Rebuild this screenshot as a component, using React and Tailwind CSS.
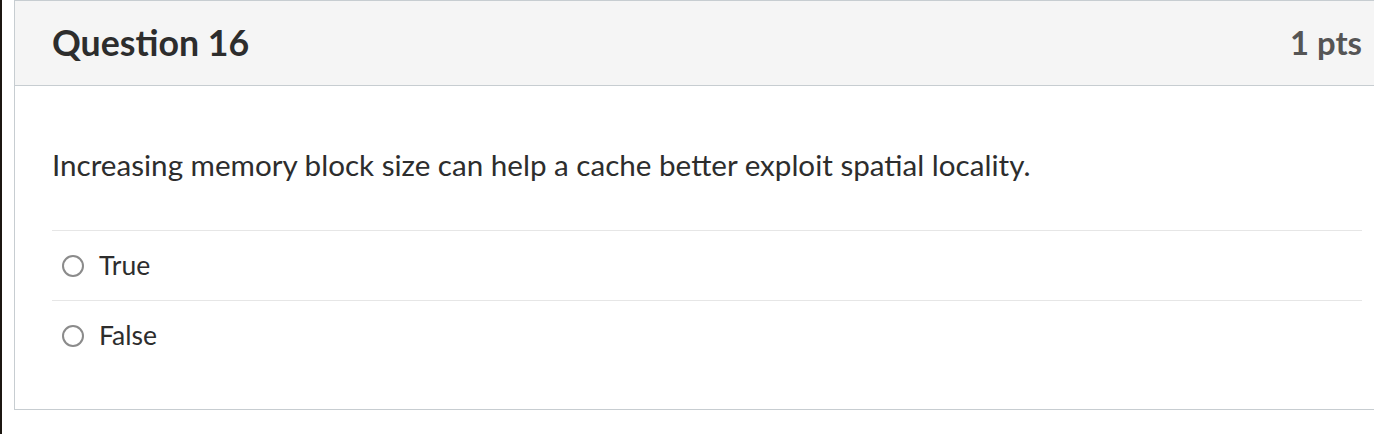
export default function App() {
  const answers = ['True', 'False'];

  return (
    <div className="relative flex h-[434px] w-[1374px] overflow-hidden bg-white">
      {/* dark strip at the left edge */}
      <div className="w-[2px] shrink-0 bg-[#1c1711]" />
      <div className="ml-[12px] w-[1386px] shrink-0 font-['Lato','Noto_Sans',sans-serif] text-[#2d2d2d]">
        <div className="h-[410px] border border-[#c7cdd1]">
          {/* Header */}
          <div className="flex h-[85px] items-center justify-between border-b border-[#c7cdd1] bg-[#f5f5f5] px-[37px]">
            <h2 className="text-[35.7px] font-bold leading-none">Question 16</h2>
            <div className="text-[32.8px] font-bold leading-none text-[#555555]">1 pts</div>
          </div>

          {/* Body */}
          <div className="px-[37px] pt-[59px]">
            <p className="text-[29.6px] leading-[40px]">
              Increasing memory block size can help a cache better exploit spatial locality.
            </p>
            <div className="mt-[45px]">
              {answers.map((a) => (
                <label key={a} className="flex h-[70px] items-center border-t border-[#e6e6e6]">
                  <span className="ml-[10px] h-[22px] w-[22px] shrink-0 rounded-full border-2 border-[#8b8b8b] bg-white" />
                  <span className="ml-[15px] text-[26.5px] leading-none">{a}</span>
                </label>
              ))}
            </div>
          </div>
        </div>
      </div>
    </div>
  );
}
